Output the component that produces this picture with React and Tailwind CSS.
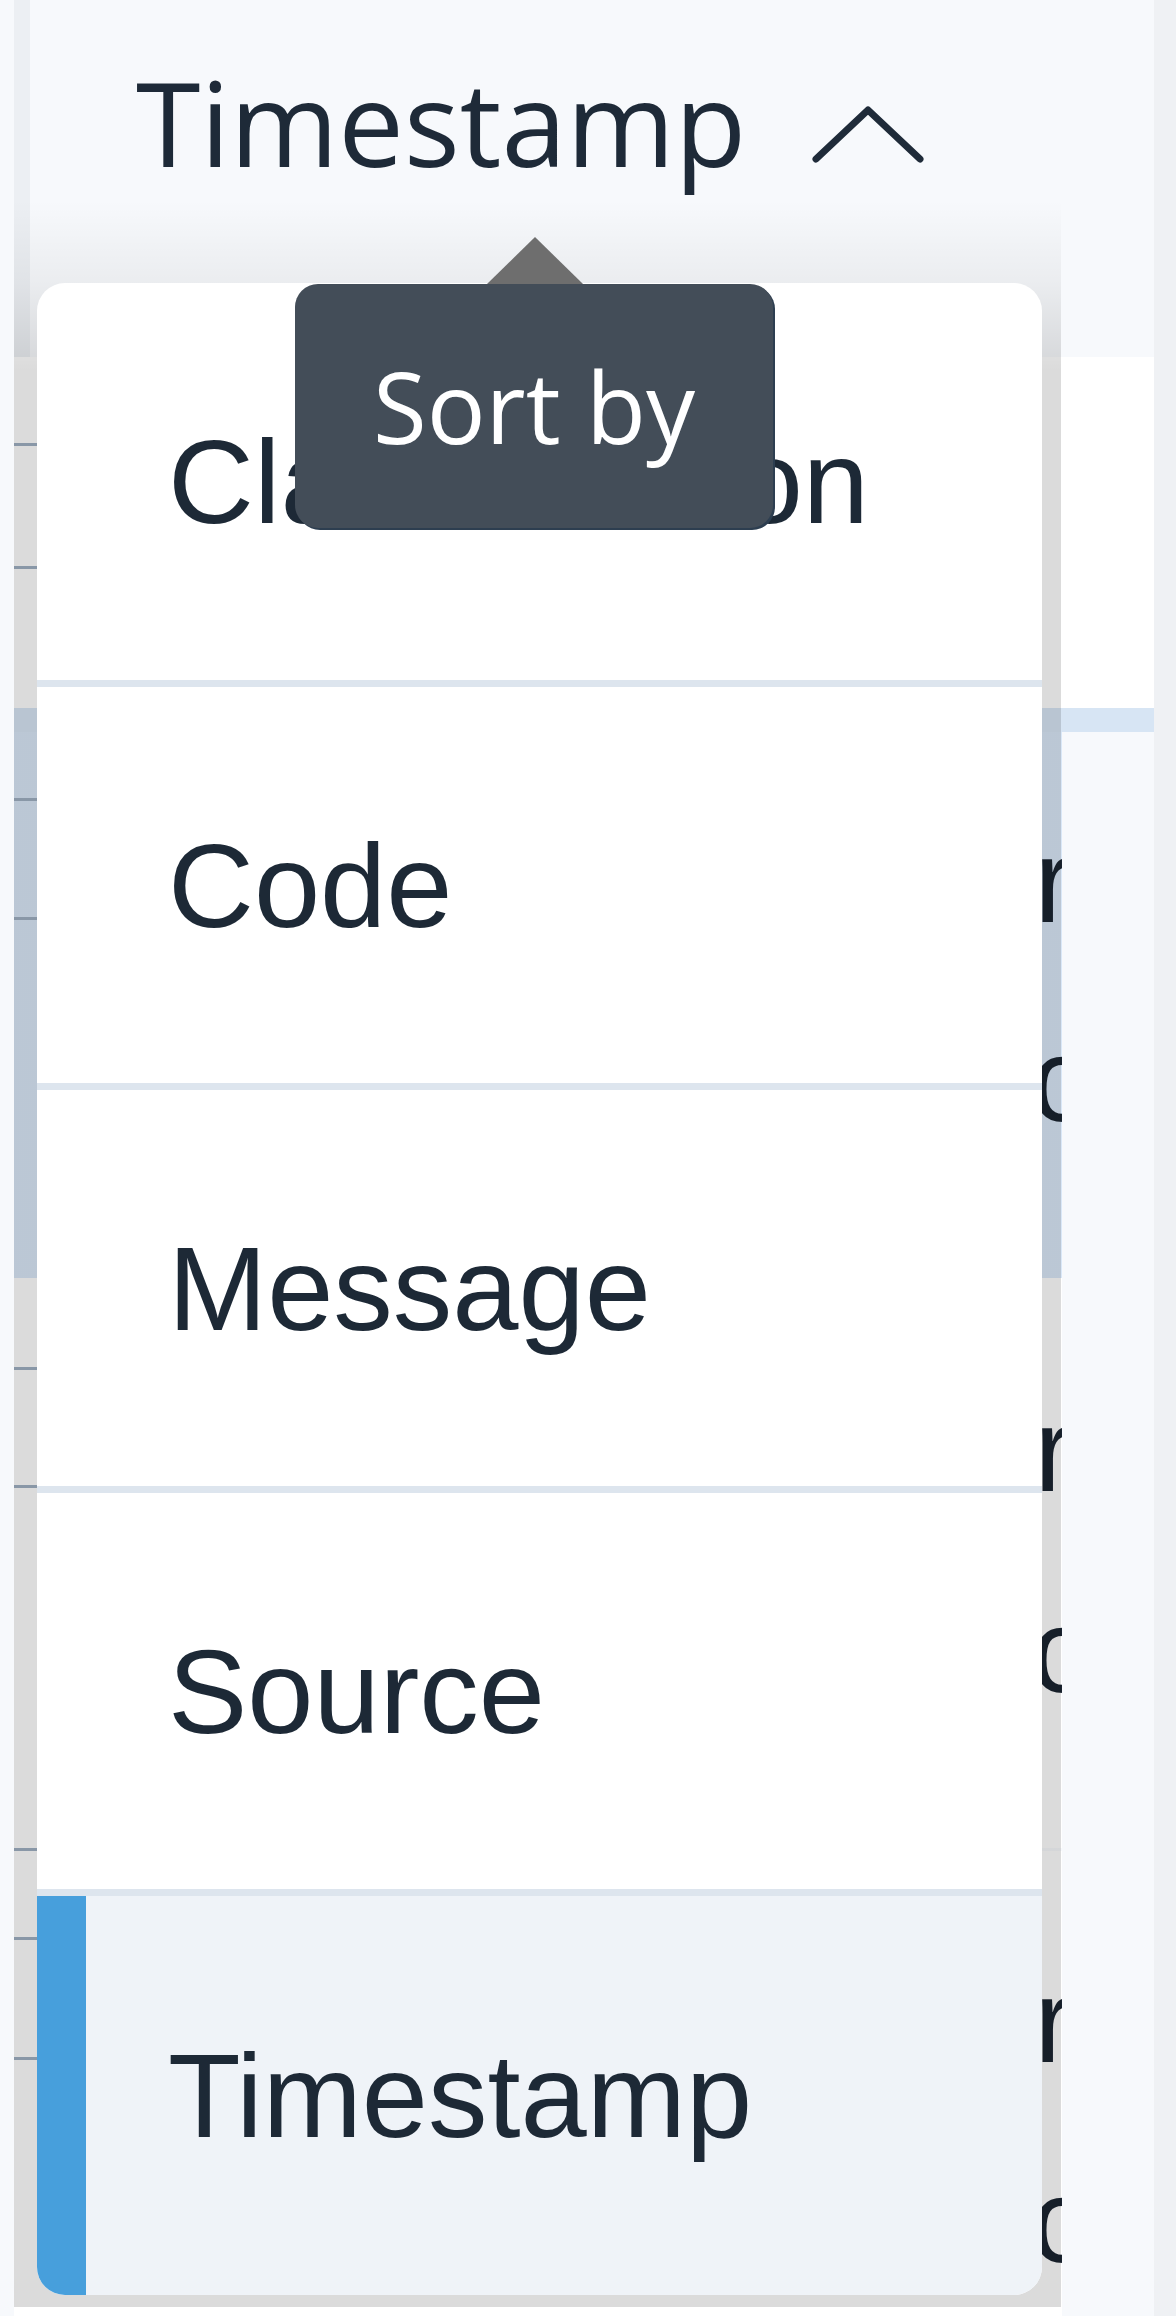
/* ── Sort dropdown over a table ───────────────────────────────── */

const SORT_FIELDS = ['Classification', 'Code', 'Message', 'Source', 'Timestamp']
const SELECTED = 'Timestamp'

/* ── Chevron ─────────────────────────────────────────────────── */
function ChevronUp() {
  return (
    <svg width="116" height="64" viewBox="0 0 116 64" className="mt-[41px] ml-[64px] shrink-0">
      <polyline
        points="6,55 58,6 110,55"
        fill="none"
        stroke="#1f2b39"
        strokeWidth="7"
        strokeLinecap="round"
        strokeLinejoin="round"
      />
    </svg>
  )
}

/* ── Backdrop table row ───────────────────────────────────────── */
function Tick({ className }) {
  return <div className={`h-[3px] w-[23px] bg-[#9fb0c2] ${className}`} />
}

function BackRow({ bg, h, t1, t2, l1, l2, first, second }) {
  return (
    <div className={`flex shrink-0 ${bg} ${h}`}>
      <div className="flex w-[23px] shrink-0 flex-col">
        <Tick className={t1} />
        <Tick className={t2} />
      </div>
      <div className="flex shrink-0 flex-col text-[119px] leading-[120px] text-[#1a2430]">
        <p className={`w-[1037px] whitespace-nowrap text-right ${l1}`}>{first}</p>
        <p className={`w-[1053px] whitespace-nowrap text-right ${l2}`}>{second}</p>
      </div>
    </div>
  )
}

function Backdrop() {
  return (
    <div className="flex h-full">
      <div className="w-[14px] shrink-0" />
      <div className="flex w-[1140px] shrink-0 flex-col">
        <header className="flex h-[357px] shrink-0 items-start border-l-[16px] border-[#eceff3] pl-[106px] pt-[63px]">
          <span className="font-['Open_Sans',sans-serif] text-[117px] leading-[117px] text-[#1e2a38]">
            Timestamp
          </span>
          <ChevronUp />
        </header>
        <div className="flex h-[351px] shrink-0 flex-col bg-white">
          <Tick className="mt-[86px]" />
          <Tick className="mt-[120px]" />
        </div>
        <div className="h-[24px] shrink-0 bg-[#d7e5f4]" />
        <div className="flex flex-1">
          <div className="flex w-[1048px] shrink-0 flex-col overflow-hidden">
            <BackRow
              bg="bg-[#dae8f8]" h="h-[546px]"
              t1="mt-[66px]" t2="mt-[116px]"
              l1="mt-[89px]" l2="mt-[79px]"
              first="Error" second="Sync"
            />
            <BackRow
              bg="bg-white" h="h-[570px]"
              t1="mt-[89px]" t2="mt-[115px]"
              l1="mt-[112px]" l2="mt-[81px]"
              first="Error" second="Sync"
            />
            <div className="h-[3px] w-[23px] shrink-0 bg-[#9fb0c2]" />
            <BackRow
              bg="bg-white" h="h-[570px]"
              t1="mt-[86px]" t2="mt-[117px]"
              l1="mt-[110px]" l2="mt-[80px]"
              first="Error" second="Sync"
            />
          </div>
          <div className="flex-1 bg-[#f7f9fc]" />
        </div>
      </div>
      <div className="flex-1 bg-[#eff1f4]" />
    </div>
  )
}

/* ── Sort menu ───────────────────────────────────────────────── */
function MenuItem({ label, first }) {
  const border = first ? '' : 'border-t-[7px] border-[#dde5ee]'
  if (label === SELECTED) {
    return (
      <div className={`flex flex-1 bg-[#eff3f8] ${border}`}>
        <div className="w-[49px] shrink-0 bg-[#479fdc]" />
        <div className="flex items-center pl-[82px]">{label}</div>
      </div>
    )
  }
  return (
    <div className={`flex shrink-0 items-center pl-[131px] ${first ? 'h-[397px]' : 'h-[403px]'} ${border}`}>
      {label}
    </div>
  )
}

function SortMenu() {
  return (
    <>
      <div className="absolute left-[14px] top-[200px] h-[2107px] w-[1047px] bg-[linear-gradient(to_bottom,rgba(0,0,0,0)_0px,rgba(0,0,0,0.05)_83px,rgba(0,0,0,0.14)_170px,rgba(0,0,0,0.14)_100%)] pb-[12px] pl-[23px] pr-[19px] pt-[83px]">
        <div className="flex h-full flex-col overflow-hidden rounded-[28px] bg-white text-[119px] leading-[119px] text-[#1d2936]">
          {SORT_FIELDS.map((f, i) => (
            <MenuItem key={f} label={f} first={i === 0} />
          ))}
        </div>
      </div>

      {/* tooltip */}
      <svg width="96" height="54" viewBox="0 0 96 54" className="absolute left-[487px] top-[237px]">
        <polygon points="48,0 96,47 96,54 0,54 0,47" fill="#6e6e6e" />
      </svg>
      <div className="absolute left-[295px] top-[284px] flex h-[244px] w-[478px] items-center justify-center rounded-[23px] bg-[#434d58] font-['Open_Sans',sans-serif] text-[98px] leading-[98px] text-white shadow-[2px_2px_0_#2d3e50]">
        Sort by
      </div>
    </>
  )
}

export default function App() {
  return (
    <div className="relative h-[2316px] w-[1176px] overflow-hidden bg-[#f7f9fc] font-['Liberation_Sans',Arial,sans-serif]">
      <Backdrop />
      <SortMenu />
    </div>
  )
}
